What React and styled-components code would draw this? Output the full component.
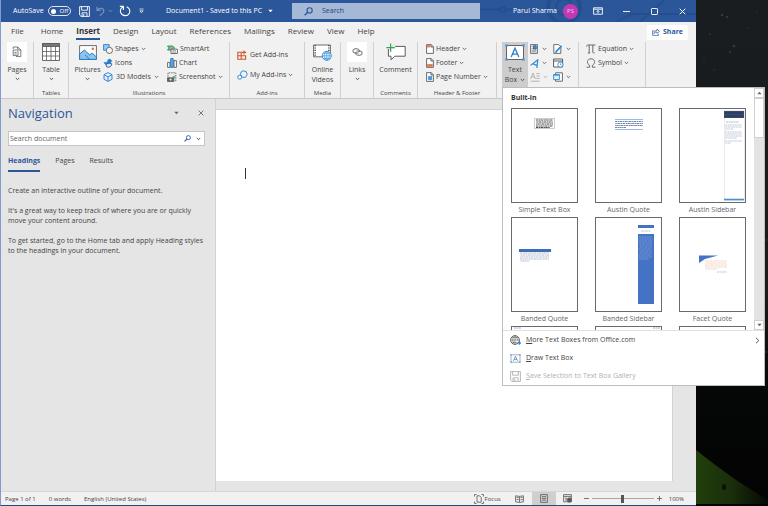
import React from 'react';
import styled, { createGlobalStyle, css } from 'styled-components';

const GlobalStyle = createGlobalStyle`
  * {
    box-sizing: border-box;
  }

  body {
    margin: 0;
    background: #050606;
    color: #444;
    font-family: 'Open Sans', 'Noto Sans', sans-serif;
    font-size: 7px;
    line-height: 10px;
  }

  button, input {
    margin: 0;
    padding: 0;
    border: 0;
    background: none;
    color: inherit;
    font: inherit;
  }

  svg {
    display: block;
    flex: none;
  }
`;

/* ---------- layout ---------- */

const Desktop = styled.div`
  display: grid;
  grid-template-columns: minmax(0, 1fr) 72px;
  min-height: 100vh;
`;

const Window = styled.div`
  display: flex;
  flex-direction: column;
  border-left: 1px solid #7f9ccb;
  border-bottom: 1px solid #24497f;
  background: #e5e5e5;
`;

const Wallpaper = styled.aside`
  display: flex;
  flex-direction: column;
  justify-content: space-between;
  background: linear-gradient(#1a1d20, #17191c 60%, #050606 78%, #030303);
`;

/* ---------- title bar ---------- */

const TitleBar = styled.header`
  display: flex;
  align-items: center;
  height: 22px;
  padding-left: 12px;
  background: #2b579a;
  color: #fff;
`;

const QuickAccess = styled.div`
  display: flex;
  align-items: center;
  width: 153px;
`;

const AutoSave = styled.label`
  display: flex;
  align-items: center;
  gap: 4px;
  margin-right: 8px;
`;

const Switch = styled.span`
  display: flex;
  align-items: center;
  gap: 4px;
  width: 23px;
  height: 10px;
  padding-left: 2px;
  border: 1px solid #dfe7f3;
  border-radius: 5px;
  font-size: 6px;

  input {
    appearance: none;
    width: 5px;
    height: 5px;
    border-radius: 50%;
    background: #fff;
  }
`;

const QuickButton = styled.button`
  display: flex;
  align-items: center;
  justify-content: center;
  gap: 3px;
  width: ${({ $w }) => $w || 11}px;
  margin-right: ${({ $gap }) => $gap || 0}px;
  opacity: ${({ disabled }) => (disabled ? 0.35 : 1)};
`;

const DocTitle = styled.button`
  display: flex;
  align-items: center;
  gap: 6px;
  width: 126px;
  white-space: nowrap;
`;

const SearchBox = styled.label`
  display: flex;
  flex: 1;
  align-items: center;
  gap: 9px;
  height: 16px;
  padding-left: 12px;
  background: #a5b8d6;
  color: #1f4e93;

  input {
    width: 100%;
    outline: none;
  }

  input::placeholder {
    color: #1f4583;
    opacity: 1;
  }
`;

const TitleRight = styled.div`
  display: flex;
  align-items: center;
  justify-content: flex-end;
  width: 216px;
  height: 22px;
  position: relative;
`;

const TitlePattern = styled.svg`
  position: absolute;
  inset: 0;
  opacity: 0.4;
`;

const UserName = styled.span`
  position: relative;
  margin-right: 6px;
`;

const Avatar = styled.span`
  position: relative;
  width: 15px;
  height: 15px;
  margin-right: 6px;
  border-radius: 50%;
  background: #c239b3;
  color: #f3c9ee;
  font-size: 6px;
  line-height: 15px;
  text-align: center;
`;

const WindowButton = styled.button`
  display: flex;
  position: relative;
  justify-content: center;
  width: 28px;
`;

/* ---------- ribbon ---------- */

const TabBar = styled.nav`
  display: flex;
  align-items: center;
  gap: 13px;
  height: 20px;
  padding: 0 8px 0 10px;
  background: #f1f1f1;
  font-size: 8px;
`;

const Tab = styled.button`
  height: 16px;
  border-bottom: 2px solid transparent;

  &:first-child {
    margin-right: 4px;
  }

  ${({ $active }) =>
    $active &&
    css`
      border-color: #2b579a;
      color: #333;
      font-weight: 700;
    `}
`;

const ShareButton = styled.button`
  display: flex;
  align-items: center;
  justify-content: center;
  gap: 3px;
  width: 41px;
  height: 15px;
  margin-left: auto;
  border-radius: 2px;
  background: #fff;
  color: #2b579a;
  font-size: 7px;
  font-weight: 700;
`;

const Ribbon = styled.div`
  display: flex;
  height: 57px;
  border-bottom: 1px solid #c8c8c8;
  background: #f1f1f1;
`;

const Group = styled.section`
  display: flex;
  flex-direction: column;
  justify-content: space-between;
  width: ${({ $w }) => $w}px;
  border-right: 1px solid #d0d0d0;
`;

const GroupBody = styled.div`
  display: flex;
  justify-content: ${({ $start }) => ($start ? 'flex-start' : 'center')};
  padding-left: ${({ $start }) => $start || 0}px;
  height: 45px;
`;

const GroupLabel = styled.div`
  height: 8px;
  font-size: 6px;
  line-height: 7px;
  text-align: center;
  white-space: nowrap;
`;

const BigButton = styled.button`
  display: flex;
  flex-direction: column;
  align-items: center;
  width: ${({ $w }) => $w || 32}px;
  height: 45px;
  background: ${({ $pressed }) => ($pressed ? '#cdcdcd' : 'none')};
  white-space: nowrap;
`;

const BigIcon = styled.span`
  display: grid;
  place-items: center;
  width: 20px;
  height: 20px;
  margin-bottom: 3px;
  background: ${({ $card }) => ($card ? '#fff' : 'none')};
  color: #5c5c5c;
`;

const ButtonLine = styled.span`
  display: flex;
  align-items: center;
  gap: 3px;
  min-height: 7px;
  line-height: 10px;
`;

const Column = styled.div`
  display: flex;
  flex-direction: column;
  width: ${({ $w }) => $w}px;
  padding-top: ${({ $top }) => $top || 0}px;
`;

const SmallButton = styled.button`
  display: flex;
  align-items: center;
  gap: ${({ $gap }) => $gap || 3}px;
  height: ${({ $h }) => $h || 14}px;
  opacity: ${({ disabled }) => (disabled ? 0.45 : 1)};
  white-space: nowrap;

  svg {
    color: #5c5c5c;
  }
`;

const MenuAnchor = styled.div`
  position: relative;
`;

/* ---------- text box gallery ---------- */

const Menu = styled.div`
  position: absolute;
  z-index: 2;
  top: 100%;
  left: 0;
  width: 263px;
  border: 1px solid #bdbdbd;
  background: #fff;
  text-align: left;
`;

const GalleryArea = styled.div`
  display: flex;
  height: 243px;
  border-bottom: 1px solid #e1e1e1;
`;

const Gallery = styled.div`
  flex: 1;
  padding-left: 8px;
  overflow: hidden;
`;

const GalleryTitle = styled.h2`
  height: 20px;
  margin: 0;
  color: #333;
  font-size: 7px;
  line-height: 19px;
`;

const GalleryGrid = styled.div`
  display: grid;
  grid-template-columns: repeat(3, 67px);
  gap: 0 17px;
`;

const GalleryItem = styled.button`
  display: flex;
  flex-direction: column;
  align-items: center;
  height: 109px;
  color: #666;
  line-height: 13px;
  white-space: nowrap;
`;

const Thumb = styled.svg`
  border: 1px solid #6a6a6a;
  background: #fff;
`;

const ScrollBar = styled.div`
  display: flex;
  flex-direction: column;
  width: 10px;
  background: #e3e3e3;
`;

const ScrollArrow = styled.button`
  display: grid;
  place-items: center;
  height: 10px;
  border: 1px solid #cfcfcf;
  background: #fff;
  color: #666;
`;

const ScrollThumb = styled.div`
  height: 40px;
  margin-bottom: auto;
  border: 1px solid #cfcfcf;
  background: #fff;
`;

const MenuItem = styled.button`
  display: flex;
  align-items: center;
  gap: 5px;
  width: 100%;
  height: 18px;
  padding: 0 4px 0 7px;
  color: ${({ disabled }) => (disabled ? '#b0b0b0' : '#444')};

  svg:nth-of-type(2) {
    margin-left: auto;
  }
`;

/* ---------- workspace ---------- */

const Workspace = styled.main`
  display: grid;
  flex: 1;
  grid-template-columns: 215px minmax(0, 1fr);
`;

const NavPane = styled.aside`
  padding: 4px 10px 0 7px;
  border-right: 1px solid #d2d2d2;
`;

const NavHeader = styled.div`
  display: flex;
  align-items: center;
  height: 20px;
  margin-bottom: 8px;
`;

const NavTitle = styled.h1`
  flex: 1;
  margin: 0;
  color: #2b579a;
  font-size: 13px;
  font-weight: 400;
  line-height: 20px;
`;

const NavButton = styled.button`
  display: flex;
  justify-content: center;
  width: 8px;
  margin-left: 17px;
  color: #666;
`;

const NavSearch = styled.label`
  display: flex;
  align-items: center;
  gap: 5px;
  height: 15px;
  padding: 0 3px 0 1px;
  border: 1px solid #c6c6c6;
  background: #fff;

  input {
    flex: 1;
    min-width: 0;
    outline: none;
  }

  input::placeholder {
    color: #666;
    opacity: 1;
  }
`;

const NavTabs = styled.div`
  display: flex;
  gap: 15px;
  margin: 8px 0 14px;
`;

const NavTab = styled.button`
  height: 18px;
  padding-bottom: 3px;
  border-bottom: 2px solid ${({ $active }) => ($active ? '#2b579a' : 'transparent')};
  color: ${({ $active }) => ($active ? '#2b579a' : '#444')};
  font-weight: ${({ $active }) => ($active ? 700 : 400)};
`;

const NavText = styled.p`
  margin: 0 -4px 10px 0;
`;

const Canvas = styled.div`
  display: flex;
  padding: 10px 23px 10px 0;
`;

const Page = styled.article`
  flex: 1;
  padding: 58px 29px;
  border-top: 1px solid #d2d2d2;
  border-right: 1px solid #d2d2d2;
  background: #fff;
`;

const Caret = styled.div`
  width: 1px;
  height: 11px;
  background: #333;
`;

/* ---------- status bar ---------- */

const StatusBar = styled.footer`
  display: flex;
  align-items: center;
  height: 14px;
  padding: 0 12px 0 4px;
  border-top: 1px solid #d6d6d6;
  background: #f1f1f1;
  font-size: 6px;

  svg {
    color: #666;
  }
`;

const StatusText = styled.span`
  margin-right: 13px;
`;

const FocusButton = styled.button`
  display: flex;
  align-items: center;
  gap: 1px;
  margin-right: 7px;
  margin-left: auto;
`;

const ViewButton = styled.button`
  display: grid;
  place-items: center;
  width: 24px;
  height: 13px;
  background: ${({ $active }) => ($active ? '#cfcfcf' : 'none')};
`;

const Zoom = styled.div`
  display: flex;
  align-items: center;
  gap: 3px;
  margin: 0 7px 0 4px;

  input {
    appearance: none;
    width: 62px;
    height: 9px;
    background: linear-gradient(#a6a6a6, #a6a6a6) center / 100% 1px no-repeat;
  }

  input::-webkit-slider-thumb {
    appearance: none;
    width: 3px;
    height: 8px;
    background: #555;
  }
`;

/* ---------- icons ---------- */

const Icon = ({ w = 10, h = w, children }) => (
  <svg width={w} height={h} viewBox={`0 0 ${w} ${h}`} fill="none" stroke="currentColor" strokeWidth="0.9" aria-hidden="true">
    {children}
  </svg>
);

const Chevron = () => (
  <Icon w={5} h={4}>
    <path d="M0.8 1l1.7 1.7L4.2 1" />
  </Icon>
);

const Triangle = ({ up }) => (
  <Icon w={5} h={4}>
    <path d={up ? 'M0.3 3.2h4.4L2.5 0.8z' : 'M0.3 0.8h4.4L2.5 3.2z'} fill="currentColor" stroke="none" />
  </Icon>
);

const SaveIcon = () => (
  <Icon w={11}>
    <path d="M0.6 0.6h9.8v9.8H2L0.6 9z M2.6 0.6v3.6h5.8V0.6 M3 10.4V6.8h5v3.6 M4.7 8v2.4" />
  </Icon>
);

const UndoIcon = () => (
  <Icon w={9} h={10}>
    <path d="M1 0.8v3.6h3.6 M1 4.4C3 1.6 7.8 1.6 7.8 5.2 7.8 7 6 8 3.8 9.6" strokeWidth="1.2" />
  </Icon>
);

const RedoIcon = () => (
  <Icon w={12}>
    <path d="M0.8 1.4h3.6V5 M4 1.8C1.6 3.2 0.9 5.4 1.8 7.8c1.6 3.6 6.6 3.8 8.4 0.6C11.6 5.8 10.4 2.8 7.6 1.8" strokeWidth="1.1" />
  </Icon>
);

const CustomizeIcon = () => (
  <Icon w={5} h={6}>
    <path d="M0.5 1h4 M0.8 2.8h3.4L2.5 4.8z" strokeWidth="0.7" />
  </Icon>
);

const SearchIcon = ({ w = 8 }) => (
  <svg width={w} height={w} viewBox="0 0 8 8" fill="none" stroke="#2b579a" aria-hidden="true">
    <circle cx="5" cy="3" r="2.3" />
    <path d="M3.3 4.7L0.6 7.4" strokeWidth="1.2" />
  </svg>
);

const RibbonOptionsIcon = () => (
  <Icon w={10} h={8}>
    <path d="M0.6 0.8h8.8v6.4H0.6z M0.6 2.2h8.8 M5 6.5V3.6 M3.6 4.8L5 3.4l1.4 1.4" />
  </Icon>
);

const PagesIcon = () => (
  <Icon w={10} h={12}>
    <path d="M1.2 3V1h4.6l3 3v6.6H4 M5.8 1v3h3 M1.2 4h3.3l1.5 1.4v4.2H1.2z M2.4 6.4h2.2 M2.4 8h2.2" strokeWidth="0.8" />
  </Icon>
);

const TableIcon = () => (
  <Icon w={18}>
    <path d="M0.5 0.5h17v17h-17z" fill="#fff" />
    <path d="M0.5 0.5h17v3h-17z" fill="#777" />
    <path d="M0.5 8.5h17 M0.5 13h17 M4.5 3.5v14 M9 3.5v14 M13.5 3.5v14" strokeWidth="0.8" />
  </Icon>
);

const PicturesIcon = () => (
  <Icon w={18} h={15}>
    <path d="M0.6 0.6h16.8v13.8H0.6z" fill="#fff" />
    <path d="M0.6 14V9l4.8-4 5.4 5 2.4-2 4.2 4v2.4H0.6z" fill="#8dc3ef" stroke="#1e74bd" />
    <path d="M6 10l4.6 4.2" stroke="#1e74bd" />
    <circle cx="13.8" cy="3.8" r="1.2" fill="#e8672c" stroke="none" />
  </Icon>
);

const ShapesIcon = () => (
  <Icon>
    <path d="M0.6 0.6h5.6v5.6H0.6z" fill="#9acbf2" stroke="#2b7cd3" />
    <circle cx="6.4" cy="6.4" r="3.1" fill="#f8f8f8" />
  </Icon>
);

const IconsIcon = () => (
  <Icon>
    <path d="M1 4.2C3 5 4.6 4 4.8 2.4 5 0.8 7.4 0.6 7.8 2L9.2 2.8 8 3.5C8.2 6 6.2 7 4.6 6.8 2.6 6.8 1 5.8 1 4.2z" fill="#2b7cd3" stroke="#2b7cd3" strokeWidth="0.5" />
    <path d="M3 6.4C5.2 4.6 8 5.6 8.8 5.8 8.8 8.4 6.4 9.8 3.8 9z" fill="#d7e9f9" stroke="#1e5f9e" />
  </Icon>
);

const CubeIcon = () => (
  <Icon>
    <path d="M5 0.6l4 2.1v4.6L5 9.4 1 7.3V2.7z M1 2.7l4 2.2 4-2.2 M5 4.9v4.5" stroke="#2b7cd3" fill="#dff0fc" />
  </Icon>
);

const SmartArtIcon = () => (
  <Icon w={11} h={9}>
    <path d="M0.5 1h5.2l2 2-2 2H0.5l1.6-2z" fill="#7cc093" stroke="#328a50" />
    <path d="M4 4.2h6.4v4.3H4z" fill="#fff" />
    <path d="M5.2 5.8h3.8 M5.2 7.1h3.8" strokeWidth="0.6" />
  </Icon>
);

const ChartIcon = () => (
  <Icon>
    <path d="M0.6 4.4h2.3v5H0.6z" fill="#fff" />
    <path d="M3.7 0.6h2.5v8.8H3.7z" fill="#69afe5" stroke="#1e74bd" />
    <path d="M7 2.6h2.4v6.8H7z" fill="#fff" />
  </Icon>
);

const ScreenshotIcon = () => (
  <Icon>
    <path d="M1 4.6V0.8h7.8v8.4H7.6" strokeDasharray="1.4 0.9" />
    <path d="M0.4 5.8h6.4v3.6H0.4z" fill="#666" />
    <circle cx="3.6" cy="7.6" r="1" fill="#eee" stroke="none" />
    <path d="M7 3.6v2.8 M5.6 5h2.8" stroke="#38a05a" />
  </Icon>
);

const GetAddinsIcon = () => (
  <Icon>
    <path d="M0.8 2.2h3.4v7H0.8z M0.8 5.7h7.8v3.5H0.8 M4.2 9.2V5.7 M8.6 9.2V5.7 M4.2 5.7V2.2 M7 0.4v4.2 M5 2.4h4.2" stroke="#d0532a" strokeWidth="1.1" />
  </Icon>
);

const MyAddinsIcon = () => (
  <Icon w={11} h={10}>
    <path d="M6 0.8l3.2 0.8 1 3-1.8 2.8-3-0.2L3.6 4.8 4 2z" fill="#eaf5fd" stroke="#2b7cd3" />
    <circle cx="2.7" cy="7.2" r="2" fill="#fff" stroke="#2b7cd3" />
  </Icon>
);

const VideoIcon = () => (
  <Icon w={19} h={17}>
    <path d="M0.6 1h16.8v11.8H0.6z" fill="#fff" />
    <path d="M2.2 1v12 M15.8 1v7" strokeDasharray="1.2 1.2" strokeWidth="1.6" />
    <circle cx="13.8" cy="11.8" r="4.5" fill="#e8f5fe" stroke="#2b88d8" />
    <path d="M9.4 11.8h8.8 M13.8 7.3v9 M13.8 7.3c-3.4 3-3.4 6 0 9 M13.8 7.3c3.4 3 3.4 6 0 9 M10.4 9.2h6.8 M10.4 14.4h6.8" stroke="#2b88d8" strokeWidth="0.6" />
  </Icon>
);

const LinksIcon = () => (
  <Icon w={11} h={8}>
    <path d="M6.6 5H3A2.1 2.1 0 0 1 3 0.8h2.2A2.1 2.1 0 0 1 7 4 M4.4 3H8a2.1 2.1 0 0 1 0 4.2H5.8A2.1 2.1 0 0 1 4 4" />
  </Icon>
);

const CommentIcon = () => (
  <Icon w={20} h={18}>
    <path d="M2.4 3.4h16.8v9.8H8.8L5 16.8v-3.6H2.4z" fill="#fff" strokeWidth="1" />
    <path d="M4.6 0v9 M0 4.6h9.2" stroke="#f1f1f1" strokeWidth="3" />
    <path d="M4.6 0.4v8.4 M0.4 4.6h8.4" stroke="#38a05a" strokeWidth="1.2" />
  </Icon>
);

const SheetIcon = ({ kind }) => (
  <Icon w={8} h={10}>
    <path d="M0.6 0.6h4.6l2.2 2.2v6.6H0.6z M5 0.6V3h2.4" fill="#fff" />
    {kind === 'header' && <path d="M1 1.2h3.4v2.2H1z" fill="#e8784a" stroke="none" />}
    {kind === 'footer' && <path d="M1.4 6.4h5v2H1.4z" fill="#e8784a" stroke="#d0532a" strokeWidth="0.5" />}
    {kind === 'number' && <path d="M2.4 4.4h3.4v3.4H2.4z" fill="#4698dd" stroke="#2b7cd3" strokeWidth="0.5" />}
  </Icon>
);

const TextBoxIcon = ({ w = 20, h = 17 }) => (
  <svg width={w} height={h} viewBox="0 0 20 17" fill="none" stroke="#666" aria-hidden="true">
    <path d="M1.5 1.5h17v14h-17z" fill="#fff" />
    <path d="M6.2 13L10 4.2 13.8 13 M7.5 10.2h5" stroke="#2b7cd3" strokeWidth="1.3" />
    <path d="M0.3 0.3h2.4v2.4H0.3z M17.3 0.3h2.4v2.4h-2.4z M0.3 14.3h2.4v2.4H0.3z M17.3 14.3h2.4v2.4h-2.4z" fill="#4a9be0" stroke="none" />
  </svg>
);

const QuickPartsIcon = () => (
  <Icon w={8} h={10}>
    <path d="M0.6 0.6h6.8v8.8H0.6z" fill="#fff" />
    <path d="M3.4 1.8h2.8v3.2H3.4z" fill="#4698dd" stroke="#1e5f9e" />
    <path d="M1.6 2.4h1 M1.6 4.4h1 M1.6 6.2h4.8 M1.6 7.8h4.8" strokeWidth="0.7" />
  </Icon>
);

const WordArtIcon = () => (
  <Icon w={9}>
    <path d="M0.6 6.4L7.8 0.8 6.8 9.2 M3 4.8l4.2 1.8" stroke="#2b88d8" strokeWidth="1.2" />
  </Icon>
);

const DropCapIcon = () => (
  <Icon>
    <path d="M0.6 7L3 1l2.4 6 M1.4 5h3.2 M6.4 1.6h3.2 M6.4 4h3.2 M6.4 6.4h3.2 M0.6 9.2h9" />
  </Icon>
);

const SignatureIcon = () => (
  <Icon>
    <path d="M0.8 0.6h5l2 2v6.8h-7z" fill="#fff" />
    <path d="M3.2 7.6L8.6 1.8 M2.6 8.8l0.6-1.4" stroke="#2b88d8" strokeWidth="1.6" />
  </Icon>
);

const DateIcon = () => (
  <Icon w={11} h={10}>
    <path d="M0.6 1h9v8h-9z M0.6 3h9" fill="#fff" strokeWidth="1" />
    <circle cx="7.4" cy="6.6" r="2.6" fill="#fff" stroke="#2b88d8" />
    <path d="M7.4 5.2v1.6h1.2" stroke="#2b88d8" strokeWidth="0.7" />
  </Icon>
);

const ObjectIcon = () => (
  <Icon>
    <path d="M2.6 0.8h6.8v8.4H2.6z" fill="#fff" />
    <path d="M0.6 2.6h5.8v5H0.6z" fill="#e4f1fb" stroke="#2b88d8" />
    <path d="M0.6 3.2h5.8" stroke="#2b88d8" />
  </Icon>
);

const PiIcon = () => (
  <Icon w={10}>
    <path d="M0.6 2.6C0.8 1.2 1.4 1 2.2 1h7.2 M3.2 1v8H1.8 M3.2 9h1 M6.8 1v7.2c0 0.8 1 0.8 1.8 0.6" />
  </Icon>
);

const OmegaIcon = () => (
  <Icon w={10}>
    <path d="M0.6 9.2h3V7.4C0.2 5.4 0.8 0.8 5 0.8s4.8 4.6 1.4 6.6v1.8h3" />
  </Icon>
);

const ShareIcon = () => (
  <Icon w={8}>
    <path d="M2.6 2.8H0.6v4.6h5.8V5.8 M2 5.6C2.2 3.4 3.4 2.6 5 2.6V1l2.4 2.4L5 5.4V4C3.6 4 2.8 4.6 2 5.6z" strokeWidth="0.7" />
  </Icon>
);

const GlobeIcon = () => (
  <Icon w={11} h={10}>
    <circle cx="5" cy="5" r="4.4" strokeWidth="0.8" />
    <path d="M0.6 5h8.8 M5 0.6v8.8 M1.4 2.6h7.2 M1.4 7.4h5 M5 0.6c-3 2.6-3 6.2 0 8.8 M5 0.6c2.4 2 2.6 4 2.2 5" strokeWidth="0.5" />
    <path d="M6 8h4.4 M8.8 6.4L10.4 8 8.8 9.6" stroke="#2b88d8" strokeWidth="1.1" />
  </Icon>
);

const CloseIcon = ({ w = 7 }) => (
  <svg width={w} height={w} viewBox="0 0 7 7" fill="none" stroke="currentColor" aria-hidden="true">
    <path d="M0.7 0.7l5.6 5.6M6.3 0.7L0.7 6.3" />
  </svg>
);

/* ---------- gallery previews ---------- */

const Lines = ({ x, y, w, n, color, step = 2, last = w / 2 }) => (
  <g stroke={color} strokeWidth="0.8" strokeDasharray="2.4 0.5 1.4 0.4">
    {Array.from({ length: n }, (_, i) => (
      <path key={i} d={`M${x} ${y + i * step}h${i === n - 1 ? last : w}`} strokeDashoffset={i * 1.7} />
    ))}
  </g>
);

const previews = [
  {
    name: 'Simple Text Box',
    art: (
      <>
        <path d="M22.5 9.5h20v10h-20z" stroke="#aaa" strokeWidth="0.6" />
        <Lines x={24} y={11} w={17} n={4} color="#222" last={17} />
        <Lines x={24} y={18.5} w={13} n={1} color="#222" last={14} />
      </>
    ),
  },
  {
    name: 'Austin Quote',
    art: (
      <>
        <path d="M19 10.5h28 M19 20.5h28" stroke="#6f9bd8" strokeWidth="0.7" />
        <Lines x={19} y={12.5} w={28} n={4} color="#4a6a9c" last={11} />
      </>
    ),
  },
  {
    name: 'Austin Sidebar',
    art: (
      <>
        <path d="M44.5 1.5h20v90h-20z" stroke="#bbb" strokeWidth="0.6" strokeDasharray="1 1" />
        <path d="M44 2h20v7H44z" fill="#394b70" />
        <Lines x={45} y={4} w={18} n={2} color="#16294d" last={18} step={3} />
        <Lines x={46} y={13} w={13} n={1} color="#91acd4" last={13} />
        <Lines x={45} y={16} w={17} n={3} color="#b0bccd" />
        <Lines x={45} y={23} w={17} n={4} color="#b0bccd" last={12} />
        <Lines x={45} y={32} w={17} n={2} color="#b0bccd" last={6} />
        <path d="M44 90.5h20" stroke="#4791cf" strokeWidth="1.6" />
      </>
    ),
  },
  {
    name: 'Banded Quote',
    art: (
      <>
        <path d="M7 31h32v3H7z" fill="#3d6cb9" />
        <Lines x={8} y={35} w={29} n={5} color="#a2adbe" last={9} />
      </>
    ),
  },
  {
    name: 'Banded Sidebar',
    art: (
      <>
        <path d="M42 7h16v3H42z M42 16h16v70H42z" fill="#4472c4" />
        <Lines x={45} y={13} w={10} n={1} color="#a8b6ce" last={10} />
        <Lines x={43} y={19} w={13} n={12} color="#82a2d9" last={10} />
      </>
    ),
  },
  {
    name: 'Facet Quote',
    art: (
      <>
        <path d="M19 37.5h19l-13 3.5-6 4z" fill="#4472c4" />
        <Lines x={25} y={43} w={22} n={5} color="#efc9b4" last={12} />
        <Lines x={37} y={54} w={10} n={1} color="#b1b9c4" last={10} />
      </>
    ),
  },
];

// only the top edge of the next row shows above the footer
const nextRow = [
  <Lines key="left" x={2} y={1} w={7} n={1} color="#7d99c9" last={7} />,
  <Lines key="right" x={57} y={1} w={7} n={1} color="#7d99c9" last={7} />,
  null,
];

/* ---------- sections ---------- */

const tabs = ['File', 'Home', 'Insert', 'Design', 'Layout', 'References', 'Mailings', 'Review', 'View', 'Help'];

const Big = ({ icon, card, lines, menu, inline, ...rest }) => (
  <BigButton {...rest}>
    <BigIcon $card={card}>{icon}</BigIcon>
    {lines.map((line, i) => (
      <ButtonLine key={line}>
        {line}
        {inline && i === lines.length - 1 && <Chevron />}
      </ButtonLine>
    ))}
    {menu && (
      <ButtonLine>
        <Chevron />
      </ButtonLine>
    )}
  </BigButton>
);

const Small = ({ icon, text, menu, ...rest }) => (
  <SmallButton {...rest}>
    {icon}
    {text}
    {menu && <Chevron />}
  </SmallButton>
);

const TitleBarSection = () => (
  <TitleBar>
    <QuickAccess>
      <AutoSave>
        AutoSave
        <Switch>
          <input type="checkbox" role="switch" />
          Off
        </Switch>
      </AutoSave>
      <QuickButton $gap={6} aria-label="Save"><SaveIcon /></QuickButton>
      <QuickButton $w={18} $gap={5} disabled aria-label="Undo"><UndoIcon /><Chevron /></QuickButton>
      <QuickButton $w={12} $gap={8} aria-label="Redo"><RedoIcon /></QuickButton>
      <QuickButton $w={5} aria-label="Customize toolbar"><CustomizeIcon /></QuickButton>
    </QuickAccess>
    <DocTitle>
      Document1 - Saved to this PC
      <Triangle />
    </DocTitle>
    <SearchBox>
      <SearchIcon w={9} />
      <input type="text" placeholder="Search" aria-label="Search" />
    </SearchBox>
    <TitleRight>
      <TitlePattern width="216" height="22" viewBox="0 0 216 22" fill="none" stroke="#1e437d" strokeWidth="2" aria-hidden="true">
        <path d="M0 9.5h20 M26 9.5h28 M136 22l16-8h64 M160 22L184 0" />
        <circle cx="23" cy="9.5" r="2.5" />
        <circle cx="84" cy="7" r="16" strokeWidth="4" />
        <circle cx="84" cy="7" r="8" />
      </TitlePattern>
      <UserName>Parul Sharma</UserName>
      <Avatar>PS</Avatar>
      <WindowButton aria-label="Ribbon display options"><RibbonOptionsIcon /></WindowButton>
      <WindowButton aria-label="Minimize"><Icon w={7}><path d="M0 3.5h7" /></Icon></WindowButton>
      <WindowButton aria-label="Maximize"><Icon w={7}><rect x="0.5" y="0.5" width="6" height="6" rx="0.6" /></Icon></WindowButton>
      <WindowButton aria-label="Close"><CloseIcon /></WindowButton>
    </TitleRight>
  </TitleBar>
);

const TextBoxMenu = () => (
  <Menu>
    <GalleryArea>
      <Gallery>
        <GalleryTitle>Built-in</GalleryTitle>
        <GalleryGrid>
          {previews.map(({ name, art }) => (
            <GalleryItem key={name}>
              <Thumb width="67" height="95" viewBox="0 0 65 93" fill="none" aria-hidden="true">{art}</Thumb>
              {name}
            </GalleryItem>
          ))}
          {nextRow.map((art, i) => (
            <Thumb key={i} width="67" height="95" viewBox="0 0 65 93" fill="none" aria-hidden="true">{art}</Thumb>
          ))}
        </GalleryGrid>
      </Gallery>
      <ScrollBar>
        <ScrollArrow aria-label="Scroll up"><Triangle up /></ScrollArrow>
        <ScrollThumb />
        <ScrollArrow aria-label="Scroll down"><Triangle /></ScrollArrow>
      </ScrollBar>
    </GalleryArea>
    <MenuItem>
      <GlobeIcon />
      <span><u>M</u>ore Text Boxes from Office.com</span>
      <Icon w={5} h={7}><path d="M1 0.8l2.8 2.7L1 6.2" /></Icon>
    </MenuItem>
    <MenuItem>
      <TextBoxIcon w={11} h={9} />
      <span><u>D</u>raw Text Box</span>
    </MenuItem>
    <MenuItem disabled>
      <SaveIcon />
      <span><u>S</u>ave Selection to Text Box Gallery</span>
    </MenuItem>
  </Menu>
);

const RibbonSection = () => (
  <Ribbon>
    <Group $w={33}>
      <GroupBody><Big icon={<PagesIcon />} card lines={['Pages']} menu /></GroupBody>
    </Group>
    <Group $w={35}>
      <GroupBody><Big icon={<TableIcon />} lines={['Table']} menu /></GroupBody>
      <GroupLabel>Tables</GroupLabel>
    </Group>
    <Group $w={161}>
      <GroupBody $start={3}>
        <Big $w={31} icon={<PicturesIcon />} lines={['Pictures']} menu />
        <Column $w={64}>
          <Small icon={<ShapesIcon />} text="Shapes" menu $gap={2} />
          <Small icon={<IconsIcon />} text="Icons" $gap={2} />
          <Small icon={<CubeIcon />} text="3D Models" menu />
        </Column>
        <Column $w={60}>
          <Small icon={<SmartArtIcon />} text="SmartArt" $gap={2} />
          <Small icon={<ChartIcon />} text="Chart" $gap={2} />
          <Small icon={<ScreenshotIcon />} text="Screenshot" menu $gap={2} />
        </Column>
      </GroupBody>
      <GroupLabel>Illustrations</GroupLabel>
    </Group>
    <Group $w={75}>
      <GroupBody $start={7}>
        <Column $w={67} $top={3}>
          <Small icon={<GetAddinsIcon />} text="Get Add-ins" $h={20} />
          <Small icon={<MyAddinsIcon />} text="My Add-ins" menu $h={20} $gap={2} />
        </Column>
      </GroupBody>
      <GroupLabel>Add-ins</GroupLabel>
    </Group>
    <Group $w={36}>
      <GroupBody><Big icon={<VideoIcon />} lines={['Online', 'Videos']} /></GroupBody>
      <GroupLabel>Media</GroupLabel>
    </Group>
    <Group $w={33}>
      <GroupBody><Big icon={<LinksIcon />} card lines={['Links']} menu /></GroupBody>
    </Group>
    <Group $w={44}>
      <GroupBody><Big $w={40} icon={<CommentIcon />} lines={['Comment']} /></GroupBody>
      <GroupLabel>Comments</GroupLabel>
    </Group>
    <Group $w={79}>
      <GroupBody $start={8}>
        <Column $w={68}>
          <Small icon={<SheetIcon kind="header" />} text="Header" menu $gap={2} />
          <Small icon={<SheetIcon kind="footer" />} text="Footer" menu $gap={2} />
          <Small icon={<SheetIcon kind="number" />} text="Page Number" menu $gap={2} />
        </Column>
      </GroupBody>
      <GroupLabel>Header & Footer</GroupLabel>
    </Group>
    <Group $w={82}>
      <GroupBody $start={5}>
        <MenuAnchor>
          <Big $w={26} $pressed icon={<TextBoxIcon />} lines={['Text', 'Box']} inline aria-expanded="true" />
          <TextBoxMenu />
        </MenuAnchor>
        <GroupBody $start={2}>
          <Column $w={23}>
            <Small icon={<QuickPartsIcon />} menu $gap={4} aria-label="Quick Parts" />
            <Small icon={<WordArtIcon />} menu aria-label="WordArt" />
            <Small icon={<DropCapIcon />} menu disabled aria-label="Drop Cap" />
          </Column>
          <Column $w={20}>
            <Small icon={<SignatureIcon />} menu aria-label="Signature Line" />
            <Small icon={<DateIcon />} aria-label="Date & Time" />
            <Small icon={<ObjectIcon />} menu aria-label="Object" />
          </Column>
        </GroupBody>
      </GroupBody>
    </Group>
    <Group $w={67}>
      <GroupBody $start={7}>
        <Column $w={58}>
          <Small icon={<PiIcon />} text="Equation" menu $gap={2} />
          <Small icon={<OmegaIcon />} text="Symbol" menu $gap={2} />
        </Column>
      </GroupBody>
    </Group>
  </Ribbon>
);

const Navigation = () => (
  <NavPane>
    <NavHeader>
      <NavTitle>Navigation</NavTitle>
      <NavButton aria-label="Pane options"><Triangle /></NavButton>
      <NavButton aria-label="Close pane"><CloseIcon w={6} /></NavButton>
    </NavHeader>
    <NavSearch>
      <input type="text" placeholder="Search document" aria-label="Search document" />
      <SearchIcon w={7} />
      <Chevron />
    </NavSearch>
    <NavTabs>
      <NavTab $active>Headings</NavTab>
      <NavTab>Pages</NavTab>
      <NavTab>Results</NavTab>
    </NavTabs>
    <NavText>Create an interactive outline of your document.</NavText>
    <NavText>It's a great way to keep track of where you are or quickly<br />move your content around.</NavText>
    <NavText>To get started, go to the Home tab and apply Heading styles<br />to the headings in your document.</NavText>
  </NavPane>
);

const Status = () => (
  <StatusBar>
    <StatusText>Page 1 of 1</StatusText>
    <StatusText>0 words</StatusText>
    <StatusText>English (United States)</StatusText>
    <FocusButton>
      <Icon>
        <path d="M0.5 2.5v-2h2 M7.5 0.5h2v2 M0.5 7.5v2h2 M9.5 7.5v2h-2 M3 1.8h2.6l1.6 1.6v4.8H3z" />
      </Icon>
      Focus
    </FocusButton>
    <ViewButton aria-label="Read mode">
      <Icon w={9} h={8}><path d="M4.5 1.4L0.6 0.8v6l3.9 0.6 3.9-0.6v-6zv6 M1.6 2.6h2 M1.6 4.6h2 M5.6 2.6h2 M5.6 4.6h2" /></Icon>
    </ViewButton>
    <ViewButton $active aria-label="Print layout">
      <Icon w={8} h={9}><path d="M0.6 0.6h6.8v7.8H0.6z M2 2.6h4 M2 4.4h4 M2 6.2h4" /></Icon>
    </ViewButton>
    <ViewButton aria-label="Web layout">
      <Icon w={9}>
        <path d="M0.6 0.6h7.8v7.2H0.6z M0.6 2.4h7.8 M2 4.2h2 M2 6h2" />
        <circle cx="6.4" cy="6" r="2.2" fill="#555" />
      </Icon>
    </ViewButton>
    <Zoom>
      <button aria-label="Zoom out"><Icon w={5}><path d="M0 2.5h5" /></Icon></button>
      <input type="range" min="0" max="200" defaultValue="100" aria-label="Zoom" />
      <button aria-label="Zoom in"><Icon w={5}><path d="M0 2.5h5 M2.5 0v5" /></Icon></button>
    </Zoom>
    100%
  </StatusBar>
);

const stars = [[26, 15, '#a0645a'], [31, 17, '#667'], [38, 46, '#a0645a'], [14, 34, '#445'], [52, 28, '#334'], [34, 52, '#556'], [61, 12, '#334'], [48, 72, '#334'], [18, 70, '#334'], [8, 61, '#334'], [68, 130, '#533'], [70, 240, '#443'], [70, 352, '#7a3b22']];

const App = () => (
  <>
    <GlobalStyle />
    <Desktop>
      <Window>
        <TitleBarSection />
        <TabBar>
          {tabs.map((tab) => (
            <Tab key={tab} $active={tab === 'Insert'}>{tab}</Tab>
          ))}
          <ShareButton><ShareIcon />Share</ShareButton>
        </TabBar>
        <RibbonSection />
        <Workspace>
          <Navigation />
          <Canvas>
            <Page><Caret /></Page>
          </Canvas>
        </Workspace>
        <Status />
      </Window>
      <Wallpaper>
        <svg width="72" height="360" viewBox="0 0 72 360" aria-hidden="true">
          {stars.map(([x, y, color]) => (
            <circle key={`${x}-${y}`} cx={x} cy={y} r="0.7" fill={color} />
          ))}
        </svg>
        <svg width="72" height="60" viewBox="0 0 72 60" aria-hidden="true">
          <defs>
            <linearGradient id="hill">
              <stop offset="0" stopColor="#213f0b" />
              <stop offset="0.5" stopColor="#1a2e0b" />
              <stop offset="1" stopColor="#050804" />
            </linearGradient>
          </defs>
          <path d="M0 4l18 14 22 16 32 20v4H0z" fill="url(#hill)" />
          <ellipse cx="28" cy="41" rx="2" ry="3" fill="#0a1206" />
        </svg>
      </Wallpaper>
    </Desktop>
  </>
);

export default App;
